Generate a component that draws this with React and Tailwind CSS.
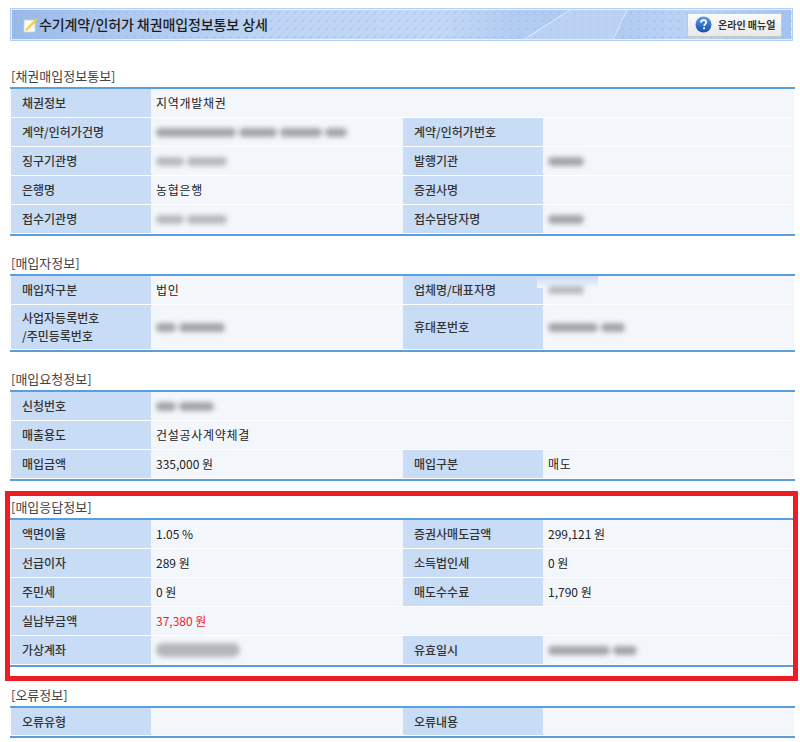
import React from "react";

// smudged out values: list of segment widths
function Blur({ parts, h = "h-[9px]", tone = "bg-[#a2a4a9]" }) {
  return (
    <div className="flex items-center gap-[3px] blur-[2.5px]">
      {parts.map((w, i) => (
        <span key={i} className={`${h} ${tone} rounded-full`} style={{ width: w }} />
      ))}
    </div>
  );
}

function Label({ children, h = "h-[29px]" }) {
  return (
    <div className={`${h} flex items-center bg-[#c9dcf5] border-b border-white pl-[11px] text-[12px] leading-[18px] font-medium text-[#333]`}>
      <div>{children}</div>
    </div>
  );
}

function Value({ children, span, h = "h-[29px]", red, wide }) {
  return (
    <div className={`${h} relative flex items-center bg-[#f3f7fc] border-b border-white pl-[5px] text-[12px] ${wide ? "tracking-[0.7px]" : ""} ${red ? "text-[#ee1c25]" : "text-[#222]"} ${span ? "col-span-3" : ""}`}>
      {children}
    </div>
  );
}

function Section({ title, children, className = "" }) {
  return (
    <div className={className}>
      <div className="h-[19px] pl-px text-[13px] leading-[15px] text-[#444]">[{title}]</div>
      <div className="grid grid-cols-[140px_252px_140px_1fr] border-t-2 border-b-2 border-[#5c9ddc] pl-px pr-px">
        {children}
      </div>
    </div>
  );
}

export default function App() {
  return (
    <div className="w-[800px] h-[742px] overflow-hidden bg-white pl-[10px] pr-[5px] pt-[8px]" style={{ fontFamily: '"Noto Sans CJK KR", "Noto Sans", sans-serif' }}>
      {/* title bar */}
      <div className="relative w-[783px] h-[33px] flex items-center justify-between border border-[#b4d0f6] outline outline-1 -outline-offset-2 outline-white/70 bg-[linear-gradient(90deg,#98b9e9_0%,#aac5ee_10%,#bdd3f4_30%,#c2d7f5_55%,#b1cbf1_65%,#b1cbf1_78%,#bcd3f4_88%,#a3c3ef_100%)]">
        <div className="absolute inset-0 bg-[radial-gradient(circle,#8fb2e6_0.7px,transparent_1px)] bg-[length:8px_8px] opacity-40" />
        <svg className="absolute inset-0" width="783" height="33" viewBox="0 0 783 33">
          <path d="M512 31 L559 1 L616 1 L602 31 Z" fill="#cfe0f8" fillOpacity="0.35" />
          <path d="M512 31 L559 1" stroke="#e6effb" strokeWidth="1" />
          <path d="M602 31 L616 1" stroke="#dbe8f9" strokeWidth="1" />
        </svg>
        <div className="relative flex items-center pl-[12px]">
          <svg width="15" height="16" viewBox="0 0 15 16">
            <rect x="1" y="3" width="11" height="12" fill="#fdfdf6" stroke="#c9cfe0" strokeWidth="0.8" />
            <path d="M3 12 L11 3.5 L13.5 1.5 L14.5 2.5 L12.5 5 L4.5 13 L2.8 13.4 Z" fill="#f5d742" stroke="#e3b92c" strokeWidth="0.5" />
          </svg>
          <div className="ml-[1px] text-[14px] font-medium tracking-[-0.1px] text-[#1c1c1c]">수기계약/인허가 채권매입정보통보 상세</div>
        </div>
        <div className="relative mr-[10px] w-[95px] h-[24px] flex items-center border border-[#c4c8cf] bg-[linear-gradient(180deg,#fbfbfb,#e9e9ea)] pl-[7px]">
          <svg width="17" height="17" viewBox="0 0 17 17">
            <defs>
              <linearGradient id="q" x1="0" y1="0" x2="0" y2="1">
                <stop offset="0" stopColor="#5f9ae6" />
                <stop offset="1" stopColor="#1450ad" />
              </linearGradient>
            </defs>
            <circle cx="8.5" cy="8.5" r="8" fill="url(#q)" />
            <path d="M5.9 6.6 C6 4.9 7.2 4.2 8.6 4.2 C10.2 4.2 11.2 5.1 11.2 6.4 C11.2 7.9 9.2 8 9.2 9.9" fill="none" stroke="#fff" strokeWidth="1.7" />
            <circle cx="9.1" cy="12.3" r="1.1" fill="#fff" />
          </svg>
          <div className="ml-[6px] text-[10px] font-bold text-[#333]">온라인 매뉴얼</div>
        </div>
      </div>

      <Section title="채권매입정보통보" className="mt-[27px]">
        <Label>채권정보</Label>
        <Value span wide>지역개발채권</Value>
        <Label>계약/인허가건명</Label>
        <Value><Blur parts={[80, 38, 42, 22]} /></Value>
        <Label>계약/인허가번호</Label>
        <Value />
        <Label>징구기관명</Label>
        <Value><Blur parts={[28, 40]} tone="bg-[#b6b8bd]" /></Value>
        <Label>발행기관</Label>
        <Value><Blur parts={[36]} /></Value>
        <Label>은행명</Label>
        <Value wide>농협은행</Value>
        <Label>증권사명</Label>
        <Value />
        <Label>접수기관명</Label>
        <Value><Blur parts={[28, 40]} tone="bg-[#b6b8bd]" /></Value>
        <Label>접수담당자명</Label>
        <Value><Blur parts={[36]} /></Value>
      </Section>

      <Section title="매입자정보" className="mt-[19px]">
        <Label>매입자구분</Label>
        <Value wide>법인</Value>
        <Label>업체명/대표자명</Label>
        <Value>
          <div className="absolute left-[-6px] top-0 w-[61px] h-[12px] bg-[linear-gradient(180deg,#c9dcf5,#f3f7fc)]" />
          <div className="relative"><Blur parts={[36]} h="h-[8px]" tone="bg-[#b6b8bd]" /></div>
        </Value>
        <Label h="h-[45px]">사업자등록번호<br />/주민등록번호</Label>
        <Value h="h-[45px]"><Blur parts={[20, 46]} /></Value>
        <Label h="h-[45px]">휴대폰번호</Label>
        <Value h="h-[45px]"><Blur parts={[50, 24]} /></Value>
      </Section>

      <Section title="매입요청정보" className="mt-[19px]">
        <Label>신청번호</Label>
        <Value span><Blur parts={[20, 35]} /></Value>
        <Label>매출용도</Label>
        <Value span wide>건설공사계약체결</Value>
        <Label>매입금액</Label>
        <Value>335,000 원</Value>
        <Label>매입구분</Label>
        <Value wide>매도</Value>
      </Section>

      {/* highlighted block */}
      <div className="mt-[10px] -ml-[5px] w-[793px] h-[190px] border-[5px] border-[#ee1c25] pt-[3px]">
        <Section title="매입응답정보">
          <Label>액면이율</Label>
          <Value>1.05 %</Value>
          <Label>증권사매도금액</Label>
          <Value>299,121 원</Value>
          <Label>선급이자</Label>
          <Value>289 원</Value>
          <Label>소득법인세</Label>
          <Value>0 원</Value>
          <Label>주민세</Label>
          <Value>0 원</Value>
          <Label>매도수수료</Label>
          <Value>1,790 원</Value>
          <Label>실납부금액</Label>
          <Value span red>37,380 원</Value>
          <Label>가상계좌</Label>
          <Value><Blur parts={[84]} h="h-[14px]" tone="bg-[#b4b6ba]" /></Value>
          <Label>유효일시</Label>
          <Value><Blur parts={[62, 24]} /></Value>
        </Section>
      </div>

      <Section title="오류정보" className="mt-[6px]">
        <Label h="h-[28px]">오류유형</Label>
        <Value h="h-[28px]" />
        <Label h="h-[28px]">오류내용</Label>
        <Value h="h-[28px]" />
      </Section>
    </div>
  );
}
